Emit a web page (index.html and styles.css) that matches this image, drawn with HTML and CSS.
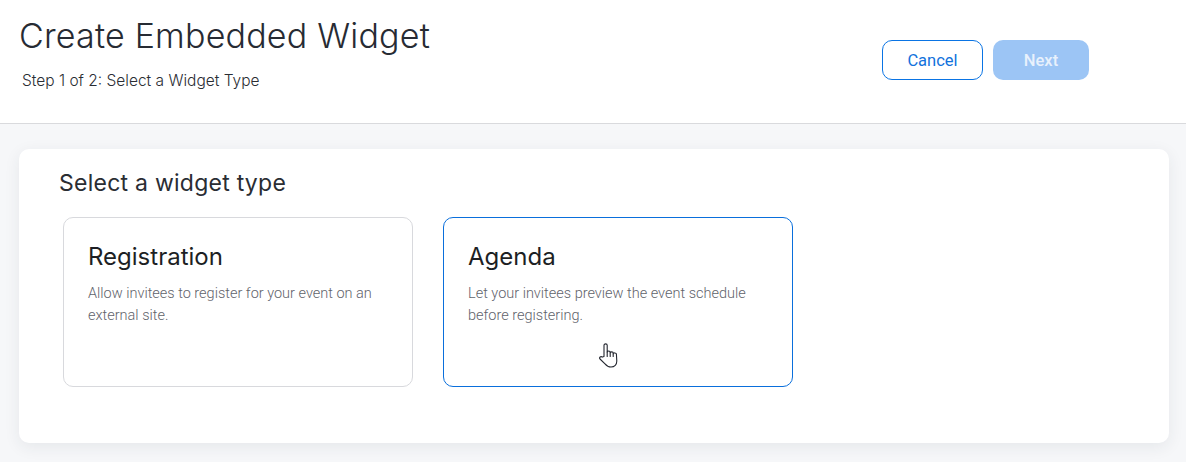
FILE: index.html
```html
<!DOCTYPE html>
<html lang="en">
<head>
<meta charset="utf-8">
<title>Create Embedded Widget</title>
<link rel="stylesheet" href="styles.css">
</head>
<body>
<header class="header">
  <div class="heading">
    <h1 class="title">Create Embedded Widget</h1>
    <p class="step">Step 1 of 2: Select a Widget Type</p>
  </div>
  <div class="actions">
    <button class="btn btn-outline">Cancel</button>
    <button class="btn btn-disabled">Next</button>
  </div>
</header>
<main class="main">
  <section class="panel">
    <h2 class="panel-title">Select a widget type</h2>
    <div class="cards">
      <div class="card">
        <h3 class="card-title">Registration</h3>
        <p class="card-text">Allow invitees to register for your event on an external site.</p>
      </div>
      <div class="card card-active">
        <h3 class="card-title">Agenda</h3>
        <p class="card-text">Let your invitees preview the event schedule before registering.</p>
        <svg class="cursor" width="19" height="25" viewBox="0 0 19 25" fill="#fff" stroke="#23262f" stroke-width="1.100" stroke-linejoin="round" stroke-linecap="round">
          <path d="M5 13.500V2.200C5 .4 8.200 .4 8.200 2.200V9c0-1.300 3-1.300 3 0v.8c0-1.300 3-1.300 3 0v1c0-1.200 3.200-1.200 3.200 .2L17.800 18c0 3.500-2.300 6-5.800 6c-3 0-4.600-1.500-6-3.200L1 16c-1.200-1.500 .8-3.200 2.300-1.900z"/>
          <path d="M8.200 9v4.500M11.200 9.800v3.700M14.200 10.800v2.700" fill="none"/>
        </svg>
      </div>
    </div>
  </section>
</main>
</body>
</html>
```
FILE: styles.css
```css
* { box-sizing: border-box; }
html, body { margin: 0; padding: 0; }
body {
  width: 1186px;
  height: 462px;
  overflow: hidden;
  background: #f6f7f9;
  font-family: Inter, Roboto, "Liberation Sans", sans-serif;
  color: #2a2d33;
}
.header {
  height: 124px;
  background: #fff;
  border-bottom: 1px solid #d9dadd;
  display: flex;
  justify-content: space-between;
  align-items: flex-start;
  padding: 0 97px 0 19px;
}
.title {
  margin: 15px 0 0;
  font-size: 34px;
  line-height: 42px;
  font-weight: 300;
  letter-spacing: 0.2px;
  color: #272b33;
}
.step {
  margin: 14px 0 0 3px;
  font-family: Inter, sans-serif;
  font-size: 15.500px;
  line-height: 20px;
  font-weight: 300;
  color: #2a2d33;
}
.actions {
  display: flex;
  gap: 10px;
  margin-top: 40px;
}
.btn {
  height: 40px;
  border-radius: 10px;
  font-family: Roboto, sans-serif;
  font-size: 16.500px;
  font-weight: 400;
  padding: 0;
}
.btn-outline {
  width: 101px;
  background: #fff;
  border: 1px solid #0a74e4;
  color: #1272dc;
}
.btn-disabled {
  width: 96px;
  background: #9cc5f5;
  border: 0;
  color: #e8f1fc;
  font-weight: 500;
}
.main {
  padding: 25px 17px 0 19px;
}
.panel {
  height: 294px;
  background: #fff;
  border-radius: 10px;
  box-shadow: 0 4px 16px rgba(40, 50, 70, 0.08);
  padding: 18px 0 0 40px;
}
.panel-title {
  margin: 0;
  font-size: 23px;
  line-height: 32px;
  font-weight: 400;
  color: #2a2d33;
  letter-spacing: 0.25px;
}
.cards {
  display: flex;
  gap: 30px;
  margin: 18px 0 0 4px;
}
.card {
  position: relative;
  width: 350px;
  height: 170px;
  border: 1px solid #d8d9dd;
  border-radius: 10px;
  padding: 24px 24px 0;
  background: #fff;
}
.card-active { border-color: #0a6fdc; }
.card-title {
  margin: 0;
  font-size: 24px;
  line-height: 30px;
  font-weight: 400;
  color: #1d1f24;
}
.card-text {
  margin: 11px 0 0;
  font-family: Roboto, sans-serif;
  font-weight: 300;
  font-size: 14.500px;
  line-height: 22px;
  color: #5f636b;
}
.cursor {
  position: absolute;
  left: 155px;
  top: 125px;
}
```
